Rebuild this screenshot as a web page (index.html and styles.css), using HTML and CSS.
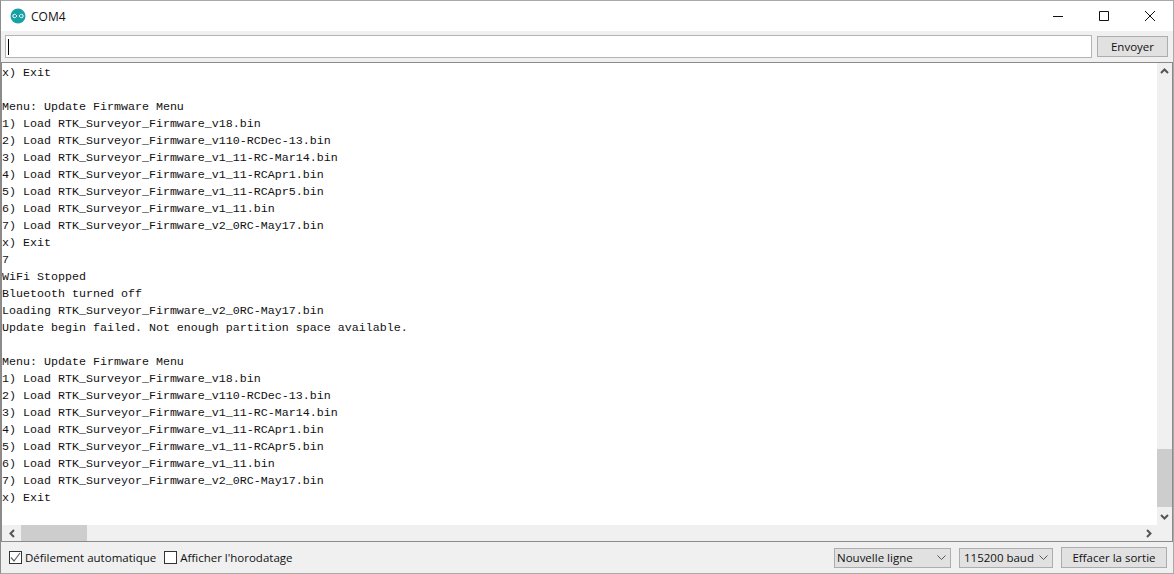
FILE: index.html
```html
<!DOCTYPE html>
<html lang="fr">
<head>
<meta charset="utf-8">
<title>COM4</title>
<link rel="stylesheet" href="styles.css">
</head>
<body>
<div class="window">
  <header class="titlebar">
    <svg class="app-icon" width="16" height="16" viewBox="0 0 16 16"><circle cx="8" cy="8" r="7.5" fill="#17a1a5"/><path d="M6.9 8C6 6.6 5.2 6.3 4.5 6.3a1.7 1.7 0 0 0 0 3.4c.7 0 1.5-.3 2.4-1.7zM9.1 8c.9-1.4 1.7-1.7 2.4-1.7a1.7 1.7 0 0 1 0 3.4c-.7 0-1.5-.3-2.4-1.7z" fill="none" stroke="#fff" stroke-width="1"/></svg>
    <span class="title">COM4</span>
    <div class="controls">
      <button class="ctl"><svg width="10" height="10" viewBox="0 0 10 10"><path d="M0 5.5h10" stroke="#111" fill="none"/></svg></button>
      <button class="ctl"><svg width="10" height="10" viewBox="0 0 10 10"><path d="M.5.5h9v9h-9z" stroke="#111" fill="none"/></svg></button>
      <button class="ctl"><svg width="10" height="10" viewBox="0 0 10 10"><path d="M0 0l10 10M10 0L0 10" stroke="#111" fill="none"/></svg></button>
    </div>
  </header>
  <div class="sendbar">
    <div class="input"><span class="caret"></span></div>
    <button class="btn send">Envoyer</button>
  </div>
  <main class="console">
    <div class="console-row">
      <pre class="output">x) Exit

Menu: Update Firmware Menu
1) Load RTK_Surveyor_Firmware_v18.bin
2) Load RTK_Surveyor_Firmware_v110-RCDec-13.bin
3) Load RTK_Surveyor_Firmware_v1_11-RC-Mar14.bin
4) Load RTK_Surveyor_Firmware_v1_11-RCApr1.bin
5) Load RTK_Surveyor_Firmware_v1_11-RCApr5.bin
6) Load RTK_Surveyor_Firmware_v1_11.bin
7) Load RTK_Surveyor_Firmware_v2_0RC-May17.bin
x) Exit
7
WiFi Stopped
Bluetooth turned off
Loading RTK_Surveyor_Firmware_v2_0RC-May17.bin
Update begin failed. Not enough partition space available.

Menu: Update Firmware Menu
1) Load RTK_Surveyor_Firmware_v18.bin
2) Load RTK_Surveyor_Firmware_v110-RCDec-13.bin
3) Load RTK_Surveyor_Firmware_v1_11-RC-Mar14.bin
4) Load RTK_Surveyor_Firmware_v1_11-RCApr1.bin
5) Load RTK_Surveyor_Firmware_v1_11-RCApr5.bin
6) Load RTK_Surveyor_Firmware_v1_11.bin
7) Load RTK_Surveyor_Firmware_v2_0RC-May17.bin
x) Exit</pre>
      <div class="vscroll">
        <svg class="arrow" width="9" height="6" viewBox="0 0 9 6"><path d="M1 5l3.500-3.500L8 5" fill="none" stroke="#555" stroke-width="2"/></svg>
        <div class="vtrack"><div class="vthumb"></div></div>
        <svg class="arrow" width="9" height="6" viewBox="0 0 9 6"><path d="M1 1l3.500 3.500L8 1" fill="none" stroke="#555" stroke-width="2"/></svg>
      </div>
    </div>
    <div class="hscroll">
      <svg class="arrow" width="6" height="9" viewBox="0 0 6 9"><path d="M5 1L1.500 4.500 5 8" fill="none" stroke="#555" stroke-width="2"/></svg>
      <div class="htrack"><div class="hthumb"></div></div>
      <svg class="arrow" width="6" height="9" viewBox="0 0 6 9"><path d="M1 1l3.500 3.500L1 8" fill="none" stroke="#555" stroke-width="2"/></svg>
      <div class="corner"></div>
    </div>
  </main>
  <footer class="statusbar">
    <label class="check"><span class="box"><svg width="13" height="13" viewBox="0 0 13 13"><path d="M2 6.500l3 3.500 6-8" fill="none" stroke="#666" stroke-width="1.200"/></svg></span>Défilement automatique</label>
    <label class="check"><span class="box"></span>Afficher l'horodatage</label>
    <div class="spacer"></div>
    <div class="select newline"><span>Nouvelle ligne</span><svg width="9" height="5" viewBox="0 0 9 5"><path d="M.5.500l4 4 4-4" fill="none" stroke="#555"/></svg></div>
    <div class="select baud"><span>115200 baud</span><svg width="9" height="5" viewBox="0 0 9 5"><path d="M.5.500l4 4 4-4" fill="none" stroke="#555"/></svg></div>
    <button class="btn clear">Effacer la sortie</button>
  </footer>
</div>
</body>
</html>
```
FILE: styles.css
```css
* { box-sizing: border-box; }
html, body { margin: 0; padding: 0; }
body { width: 1174px; height: 574px; overflow: hidden; font-family: "Open Sans", "Liberation Sans", sans-serif; font-size: 11.5px; color: #111; background: #f0f0f0; }
.window { width: 1174px; height: 574px; display: flex; flex-direction: column; border: 1px solid #a9a9a9; border-left-color: #8c8c8c; border-right-color: #a9a9a9; }
.titlebar { height: 30px; flex: none; background: #fff; display: flex; align-items: center; padding-left: 9px; }
.app-icon { flex: none; }
.title { margin-left: 5px; font-size: 12px; }
.controls { margin-left: auto; display: flex; }
.ctl { width: 46px; height: 30px; border: 0; background: transparent; padding: 0; display: flex; align-items: center; justify-content: center; }
.sendbar { height: 31px; flex: none; display: flex; align-items: center; padding: 0 5px 0 4px; gap: 5px; background: #f0f0f0; }
.input { flex: 1; height: 23px; background: #fff; border: 1px solid #b4b4b4; display: flex; align-items: center; padding-left: 2px; }
.caret { width: 1px; height: 16px; background: #000; }
.btn { height: 21px; padding: 0; background: #e1e1e1; border: 1px solid #adadad; font: inherit; color: #111; }
.send { width: 71px; }
.console { flex: 1; min-height: 0; display: flex; flex-direction: column; background: #fff; border-top: 1px solid #8a8a8a; border-bottom: 1px solid #8a8a8a; border-right: 1px solid #8a8a8a; border-left: 1px solid #8a8a8a; }
.console-row { flex: 1; min-height: 0; display: flex; }
.output { flex: 1; margin: 0; padding: 2px 0 0 0; overflow: hidden; font-family: "Liberation Mono", monospace; font-size: 11.67px; line-height: 17px; color: #111; }
.vscroll { width: 15px; margin-right: 0; flex: none; display: flex; flex-direction: column; align-items: center; background: #f0f0f0; }
.vscroll .arrow { margin: 5px 0; flex: none; }
.vtrack { flex: 1; width: 100%; display: flex; flex-direction: column; justify-content: flex-end; padding-bottom: 2px; }
.vthumb { height: 58px; background: #cdcdcd; }
.hscroll { height: 16px; flex: none; display: flex; align-items: center; background: #f0f0f0; padding-left: 7px; }
.htrack { flex: 1; height: 100%; padding-left: 6px; }
.hthumb { width: 66px; height: 100%; background: #cdcdcd; }
.corner { width: 20px; height: 100%; }
.statusbar { height: 31px; flex: none; display: flex; align-items: center; padding: 0 6px 0 8px; background: #f0f0f0; }
.check { display: flex; align-items: center; gap: 3px; margin-right: 8px; }
.box { width: 13px; height: 13px; border: 1px solid #333; background: #fff; display: block; }
.box svg { display: block; margin: -1px; }
.spacer { flex: 1; }
.select { height: 20px; background: #e1e1e1; border: 1px solid #adadad; display: flex; align-items: center; justify-content: space-between; padding: 0 4px 0 2px; margin-right: 8px; }
.newline { width: 117px; }
.baud { width: 94px; padding-left: 4px; }
.clear { width: 106px; height: 21px; }
```
